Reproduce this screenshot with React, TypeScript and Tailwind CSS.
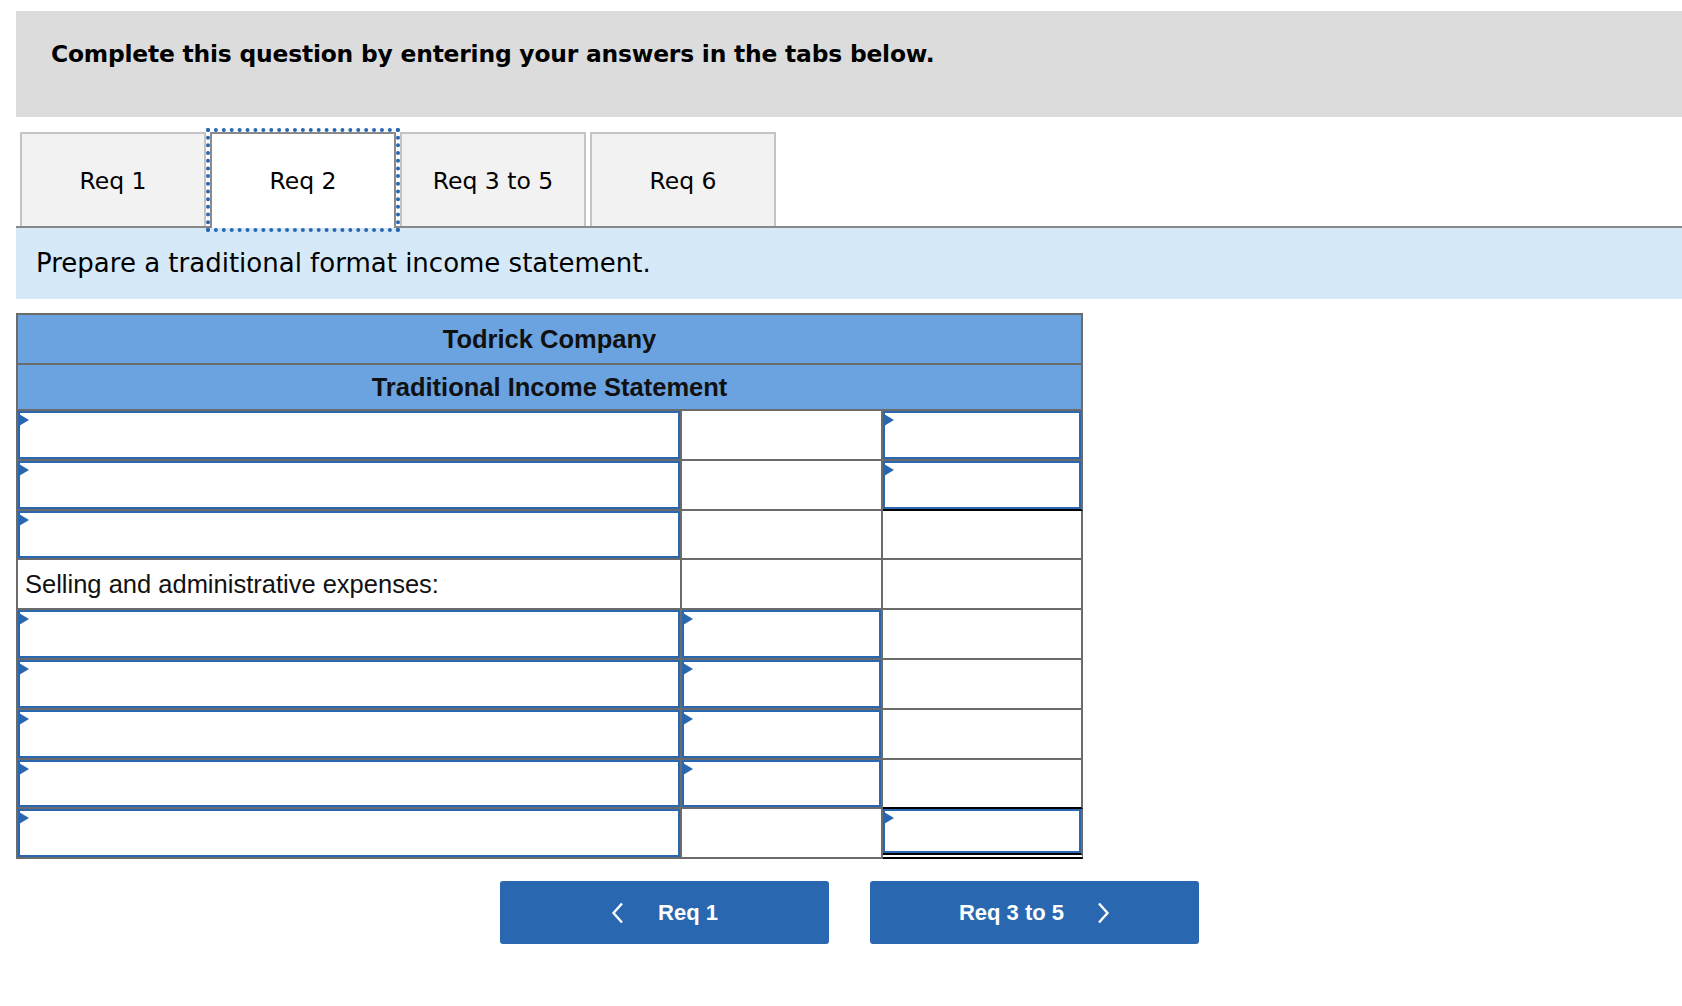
import React from 'react';

type Kind = 'plain' | 'input' | 'text';
type Bottom = 'gray' | 'black' | 'double';

interface CellDef {
  kind: Kind;
  text?: string;
  bottom?: Bottom;
}

const rows: CellDef[][] = [
  [{ kind: 'input' }, { kind: 'plain' }, { kind: 'input' }],
  [{ kind: 'input' }, { kind: 'plain' }, { kind: 'input', bottom: 'black' }],
  [{ kind: 'input' }, { kind: 'plain' }, { kind: 'plain' }],
  [{ kind: 'text', text: 'Selling and administrative expenses:' }, { kind: 'plain' }, { kind: 'plain' }],
  [{ kind: 'input' }, { kind: 'input' }, { kind: 'plain' }],
  [{ kind: 'input' }, { kind: 'input' }, { kind: 'plain' }],
  [{ kind: 'input' }, { kind: 'input' }, { kind: 'plain' }],
  [{ kind: 'input' }, { kind: 'input' }, { kind: 'plain', bottom: 'black' }],
  [{ kind: 'input' }, { kind: 'plain' }, { kind: 'input', bottom: 'double' }],
];

const Cell: React.FC<{ cell: CellDef }> = ({ cell }) => {
  const bottom =
    cell.bottom === 'black'
      ? 'border-b-2 border-b-black'
      : cell.bottom === 'double'
      ? 'border-b-[6px] border-b-black border-double'
      : 'border-b-2 border-b-[#6b6b6b]';
  return (
    <div className={`h-full border-r-2 border-r-[#6b6b6b] ${bottom}`}>
      {cell.kind === 'input' && (
        <div className="relative h-full border-2 border-[#2a67b1] bg-white">
          <span className="absolute -left-[1px] top-[1px] h-0 w-0 border-y-[6.5px] border-y-transparent border-l-[10px] border-l-[#2a67b1]" />
        </div>
      )}
      {cell.kind === 'text' && (
        <div className="flex h-full items-center pl-[7px] font-['Liberation_Sans',Arial,sans-serif] text-[25.5px] text-[#111]">
          {cell.text}
        </div>
      )}
    </div>
  );
};

const tabs = ['Req 1', 'Req 2', 'Req 3 to 5', 'Req 6'];

const App: React.FC = () => {
  return (
    <div className="min-h-[1006px] bg-white pl-[16px] pt-[11px] font-['DejaVu_Sans',Verdana,sans-serif] text-black">
      {/* instructions bar */}
      <div className="h-[106px] bg-[#dcdcdc] pl-[35px] pt-[29px]">
        <p className="text-[23.4px] font-bold leading-[28px] tracking-[-0.2px]">
          Complete this question by entering your answers in the tabs below.
        </p>
      </div>

      {/* tabs */}
      <div className="mt-[15px] flex h-[96px] items-end gap-[4px] border-b-2 border-[#888] pl-[4px]">
        {tabs.map((t) => {
          const active = t === 'Req 2';
          return (
            <div
              key={t}
              className={
                active
                  ? 'relative z-10 -mb-[2px] flex h-[96px] w-[186px] items-center justify-center border-x-2 border-t-2 border-[#8a8a8a] bg-white pt-[2px] text-[23.5px] outline-[4px] outline-offset-0 outline-dotted outline-[#2a67b1]'
                  : 'flex h-[94px] w-[186px] items-center justify-center border-x-2 border-t-2 border-[#c4c4c4] bg-[#f2f2f2] pt-[4px] text-[23.5px]'
              }
            >
              {t}
            </div>
          );
        })}
      </div>

      {/* prompt band */}
      <div className="h-[71px] bg-[#d5e9f8] pl-[20px] pt-[19px]">
        <p className="text-[26px] leading-[32px]">Prepare a traditional format income statement.</p>
      </div>

      {/* statement table */}
      <div className="mt-[14px] w-[1067px] border-l-2 border-t-2 border-[#6b6b6b] font-['Liberation_Sans',Arial,sans-serif]">
        <div className="flex h-[50px] items-center justify-center border-b-2 border-r-2 border-[#6b6b6b] bg-[#6aa3e0] text-[25.5px] font-bold text-[#111]">
          Todrick Company
        </div>
        <div className="flex h-[46px] items-center justify-center border-b-2 border-r-2 border-[#6b6b6b] bg-[#6aa3e0] text-[25.5px] font-bold text-[#111]">
          Traditional Income Statement
        </div>
        {rows.map((r, i) => (
          <div key={i} className="grid h-[49.8px] grid-cols-[664px_201px_200px]">
            {r.map((c, j) => (
              <Cell key={j} cell={c} />
            ))}
          </div>
        ))}
      </div>

      {/* navigation */}
      <div className="mt-[22px] flex gap-[41px] pl-[484px] font-['Liberation_Sans',Arial,sans-serif]">
        <button className="flex h-[63px] w-[329px] items-center justify-center gap-[34px] rounded-[3px] bg-[#2a67b1] text-[22px] font-bold text-white">
          <svg width="13" height="22" viewBox="0 0 13 22" fill="none">
            <path d="M11 1.5 L2.5 11 L11 20.5" stroke="white" strokeWidth="2.4" />
          </svg>
          <span>Req 1</span>
        </button>
        <button className="flex h-[63px] w-[329px] items-center justify-center gap-[33px] rounded-[3px] bg-[#2a67b1] text-[22px] font-bold text-white">
          <span>Req 3 to 5</span>
          <svg width="13" height="22" viewBox="0 0 13 22" fill="none">
            <path d="M2 1.5 L10.5 11 L2 20.5" stroke="white" strokeWidth="2.4" />
          </svg>
        </button>
      </div>
    </div>
  );
};

export default App;
